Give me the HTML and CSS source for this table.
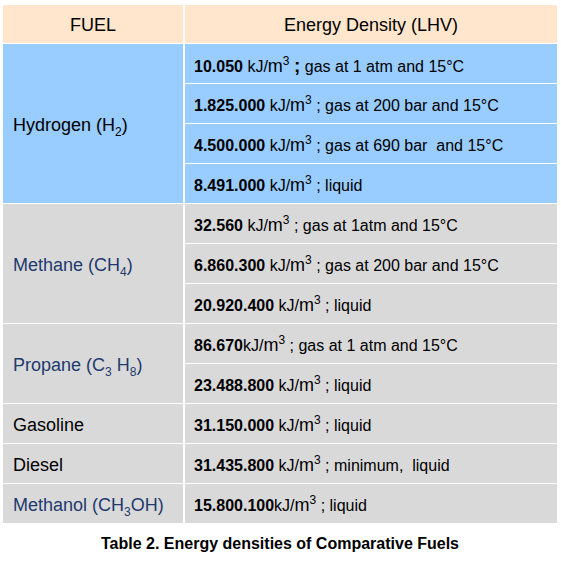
FILE: index.html
```html
<!DOCTYPE html>
<html lang="en">
<head>
    <meta charset="UTF-8">
    <title>Energy densities of Comparative Fuels</title>
    <link rel="stylesheet" href="styles.css">
</head>
<body>
<div class="page">
    <table class="fuels">
        <thead>
        <tr>
            <th class="col-fuel">FUEL</th>
            <th>Energy Density (LHV)</th>
        </tr>
        </thead>
        <tbody class="hydrogen">
        <tr>
            <td rowspan="4" class="fuel">Hydrogen (H<sub>2</sub>)</td>
            <td><b>10.050</b> kJ/<span class="m">m</span><sup>3</sup> <span class="semi">;</span> gas at 1 atm and 15°C</td>
        </tr>
        <tr>
            <td><b>1.825.000</b> kJ/<span class="m">m</span><sup>3</sup> ; gas at 200 bar and 15°C</td>
        </tr>
        <tr>
            <td><b>4.500.000</b> kJ/<span class="m">m</span><sup>3</sup> ; gas at 690 bar&nbsp; and 15°C</td>
        </tr>
        <tr>
            <td><b>8.491.000</b> kJ/<span class="m">m</span><sup>3</sup> ; liquid</td>
        </tr>
        </tbody>
        <tbody class="grey">
        <tr>
            <td rowspan="3" class="fuel blue">Methane (CH<sub>4</sub>)</td>
            <td><b>32.560</b> kJ/<span class="m">m</span><sup>3</sup> ; gas at 1atm and 15°C</td>
        </tr>
        <tr>
            <td><b>6.860.300</b> kJ/<span class="m">m</span><sup>3</sup> ; gas at 200 bar and 15°C</td>
        </tr>
        <tr>
            <td><b>20.920.400</b> kJ/<span class="m">m</span><sup>3</sup> ; liquid</td>
        </tr>
        <tr>
            <td rowspan="2" class="fuel blue">Propane (C<sub>3</sub> H<sub>8</sub>)</td>
            <td><b>86.670</b>kJ/<span class="m">m</span><sup>3</sup> ; gas at 1 atm and 15°C</td>
        </tr>
        <tr>
            <td><b>23.488.800</b> kJ/<span class="m">m</span><sup>3</sup> ; liquid</td>
        </tr>
        <tr>
            <td class="fuel">Gasoline</td>
            <td><b>31.150.000</b> kJ/<span class="m">m</span><sup>3</sup> ; liquid</td>
        </tr>
        <tr>
            <td class="fuel">Diesel</td>
            <td><b>31.435.800</b> kJ/<span class="m">m</span><sup>3</sup> ; minimum,&nbsp; liquid</td>
        </tr>
        <tr>
            <td class="fuel blue">Methanol (CH<sub>3</sub>OH)</td>
            <td><b>15.800.100</b>kJ/<span class="m">m</span><sup>3</sup> ; liquid</td>
        </tr>
        </tbody>
    </table>
    <p class="caption">Table 2. Energy densities of Comparative Fuels</p>
</div>
</body>
</html>
```

FILE: styles.css
```css
html, body {
    margin: 0;
    padding: 0;
    background: #fff;
}

.page {
    padding: 5px 4px 0 3px;
    font-family: "Liberation Sans", Arial, sans-serif;
    color: #000;
}

.fuels {
    width: 554px;
    border-collapse: collapse;
    font-size: 16px;
}

.fuels th,
.fuels td {
    border: 1px solid #fff;
    padding: 4px 0 0 9px;
    height: 35px;
    text-align: left;
    vertical-align: middle;
}

.fuels tr > :first-child {
    border-left: 0;
}

.fuels tr > :last-child {
    border-right: 0;
}

.fuels thead th {
    background: #ffe6cc;
    font-weight: normal;
    font-size: 18px;
    text-align: center;
    padding: 2px 0 0;
    height: 36px;
    border-top: 0;
}

.fuels .col-fuel {
    width: 180px;
    border-right-width: 2px;
}

.fuels .fuel {
    width: 170px;
    padding-left: 10px;
    font-size: 18px;
    border-right-width: 2px;
}

.fuel.blue {
    color: #1f3a6e;
}

.hydrogen td {
    background: #99ccff;
}

.grey td {
    background: #d9d9d9;
}

.fuels tbody:last-child tr:last-child td {
    border-bottom: 0;
}

.fuels b {
    font-weight: bold;
}

.m {
    font-size: 18px;
}

.semi {
    font-size: 19px;
    font-weight: bold;
}

sup {
    font-size: 12px;
    vertical-align: 7px;
    line-height: 0;
}

sub {
    font-size: 12px;
    vertical-align: -5px;
    line-height: 0;
}

.caption {
    margin: 12px 0 0;
    text-align: center;
    font-size: 16px;
    font-weight: bold;
}
```
